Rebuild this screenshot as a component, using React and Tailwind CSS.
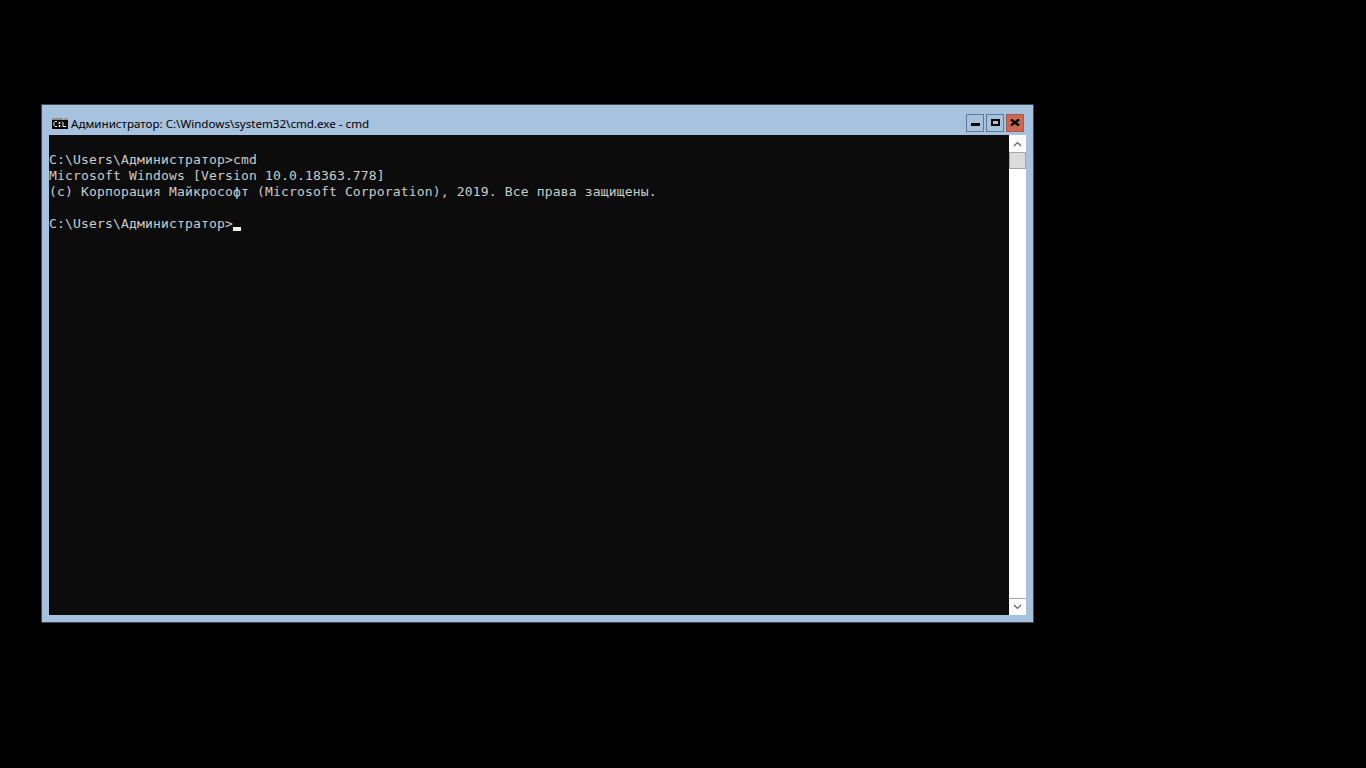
const lines = [
  '',
  'C:\\Users\\Администратор>cmd',
  'Microsoft Windows [Version 10.0.18363.778]',
  '(c) Корпорация Майкрософт (Microsoft Corporation), 2019. Все права защищены.',
  '',
];

const CmdIcon = () => (
  <svg width="16" height="11" viewBox="0 0 16 11" className="shrink-0">
    <rect x="0" y="0" width="16" height="11" fill="#000000" />
    <rect x="0" y="0" width="16" height="2" fill="#8c8c8c" />
    <rect x="11" y="0.5" width="1" height="1" fill="#e8e8e8" />
    <rect x="13" y="0.5" width="1" height="1" fill="#e8e8e8" />
    <path d="M5 3.5H3L2 4.5v3l1 1h2M7 4.5h1v1H7zM7 7.5h1v1H7zM10 3.5l1 1v3l-1 1M11 8.5h3" stroke="#ffffff" strokeWidth="1" fill="none" />
  </svg>
);

const TitleButton = ({ children, close }) => (
  <div
    className={
      close
        ? 'w-[18px] h-[18px] bg-[#cf6654] border border-[#a8584c] flex items-center justify-center'
        : 'w-[18px] h-[18px] bg-[#a6c2de] border border-[#5f7a97] flex items-center justify-center'
    }
  >
    {children}
  </div>
);

const App = () => {
  return (
    <div className="w-[1366px] h-[768px] bg-black overflow-hidden pt-[104px] pl-[41px]">
      <div className="w-[993px] h-[519px] bg-[#a6c2de] border border-[#3f4750] flex flex-col">
        {/* title bar */}
        <div className="h-[30px] shrink-0 flex items-start pt-[9px] pl-[10px] pr-[9px]">
          <div className="h-[18px] flex-1 flex items-center">
            <CmdIcon />
            <span className="ml-[3px] mt-[2px] text-[11.6px] leading-none text-black font-['Noto_Sans',sans-serif]">
              Администратор: C:\Windows\system32\cmd.exe - cmd
            </span>
          </div>
          <div className="flex gap-[2px]">
            <TitleButton>
              <div className="w-[9px] h-[3px] bg-black mt-[3px]" />
            </TitleButton>
            <TitleButton>
              <div className="w-[9px] h-[7px] border-2 border-black mb-[1px]" />
            </TitleButton>
            <TitleButton close>
              <svg width="10" height="7" viewBox="0 0 10 7" className="mb-[1px]">
                <path d="M1 0.5 L9 6.5 M9 0.5 L1 6.5" stroke="#000000" strokeWidth="2.4" fill="none" />
              </svg>
            </TitleButton>
          </div>
        </div>

        {/* console */}
        <div className="flex h-[480px] mx-[7px]">
          <div className="flex-1 pt-[1px] bg-[#0c0c0c] text-[#cccccc] font-['DejaVu_Sans_Mono',monospace] text-[13px] leading-[16px] tracking-[0.17px] whitespace-pre">
            {lines.map((line, i) => (
              <div key={i} className="h-[16px]">{line}</div>
            ))}
            <div className="h-[16px] flex">
              <span>C:\Users\Администратор&gt;</span>
              <span className="w-[8px] h-[4px] bg-[#f2f2f2] mt-[11px]" />
            </div>
          </div>

          {/* scrollbar */}
          <div className="w-[17px] bg-white flex flex-col shrink-0">
            <div className="h-[17px] flex items-center justify-center">
              <svg width="9" height="6" viewBox="0 0 9 6">
                <path d="M1 5 L4.5 1.5 L8 5" stroke="#606060" strokeWidth="1.2" fill="none" />
              </svg>
            </div>
            <div className="h-[17px] bg-[#dcdcdc] border border-[#a6a6a6]" />
            <div className="flex-1" />
            <div className="h-[17px] border-t border-[#a6a6a6] flex items-center justify-center">
              <svg width="9" height="6" viewBox="0 0 9 6">
                <path d="M1 1 L4.5 4.5 L8 1" stroke="#606060" strokeWidth="1.2" fill="none" />
              </svg>
            </div>
          </div>
        </div>
      </div>
    </div>
  );
};

export default App;
